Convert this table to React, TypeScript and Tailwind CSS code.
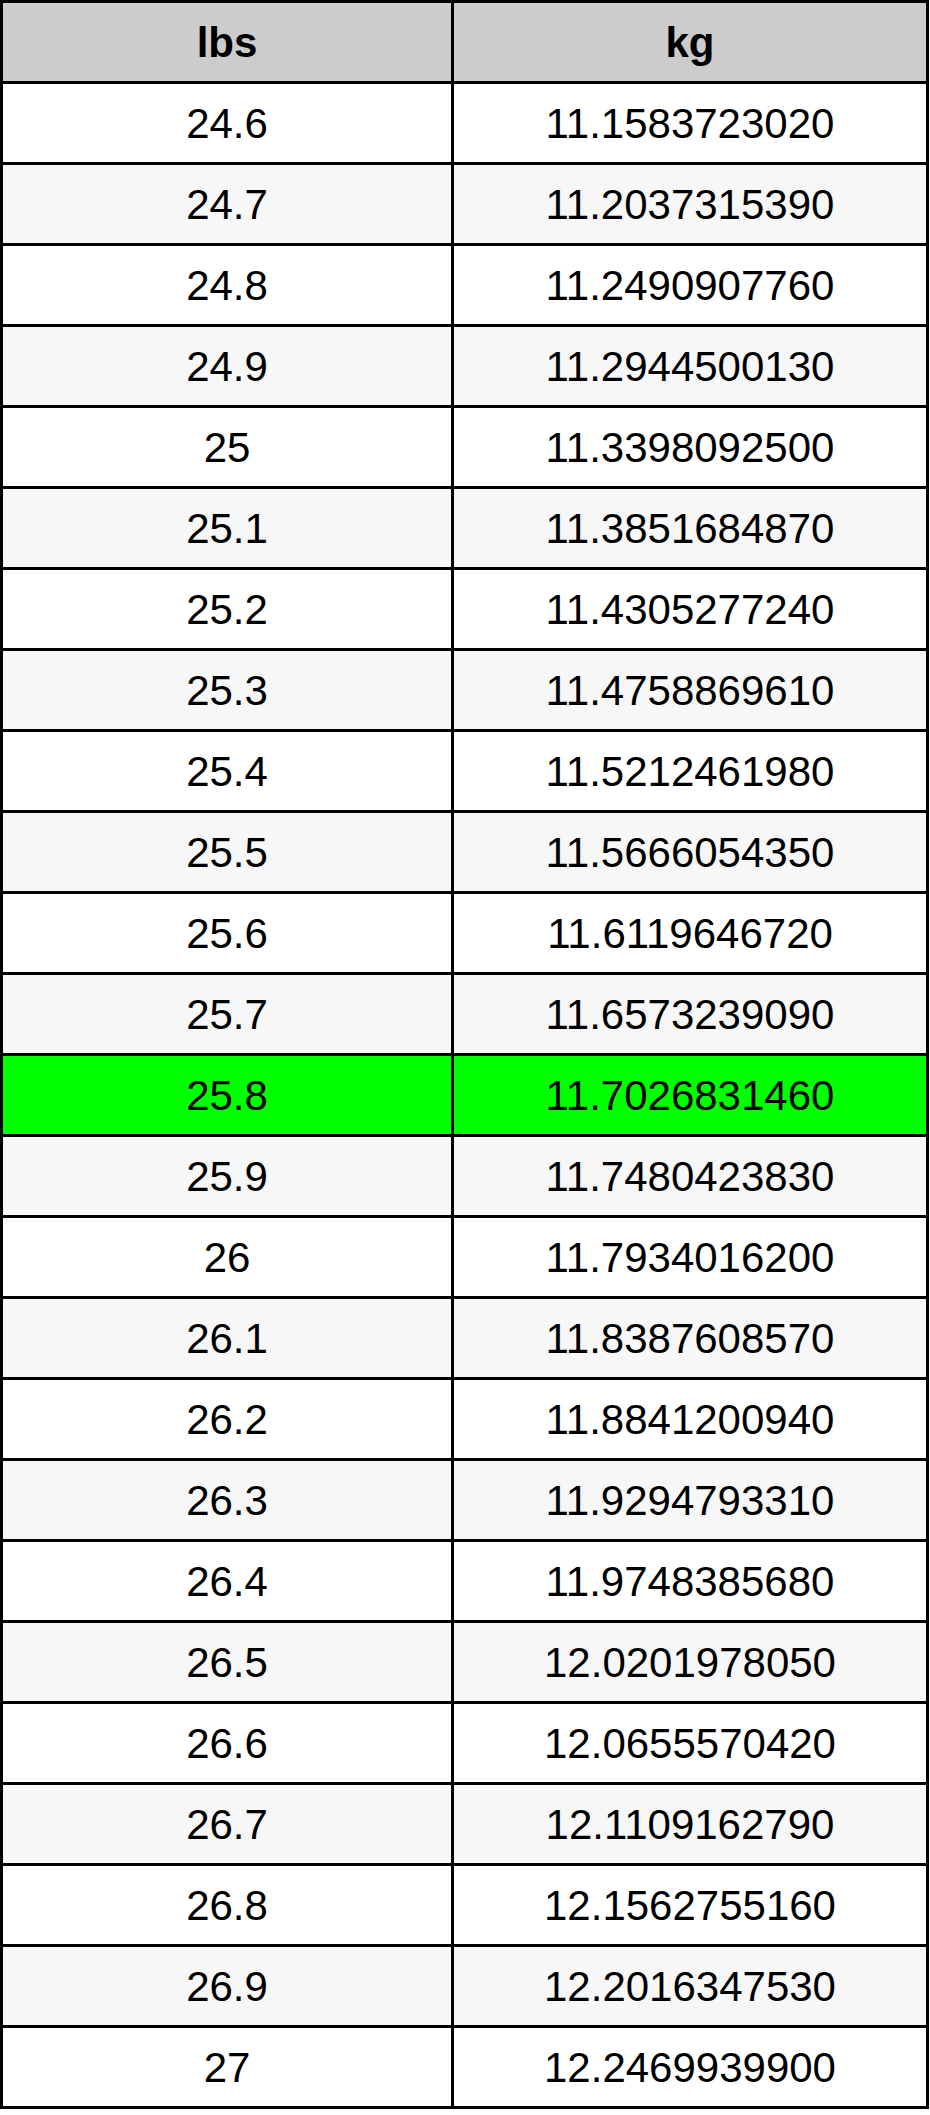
import React from "react";

const rows: [string, string][] = [
  ["24.6", "11.1583723020"],
  ["24.7", "11.2037315390"],
  ["24.8", "11.2490907760"],
  ["24.9", "11.2944500130"],
  ["25", "11.3398092500"],
  ["25.1", "11.3851684870"],
  ["25.2", "11.4305277240"],
  ["25.3", "11.4758869610"],
  ["25.4", "11.5212461980"],
  ["25.5", "11.5666054350"],
  ["25.6", "11.6119646720"],
  ["25.7", "11.6573239090"],
  ["25.8", "11.7026831460"],
  ["25.9", "11.7480423830"],
  ["26", "11.7934016200"],
  ["26.1", "11.8387608570"],
  ["26.2", "11.8841200940"],
  ["26.3", "11.9294793310"],
  ["26.4", "11.9748385680"],
  ["26.5", "12.0201978050"],
  ["26.6", "12.0655570420"],
  ["26.7", "12.1109162790"],
  ["26.8", "12.1562755160"],
  ["26.9", "12.2016347530"],
  ["27", "12.2469939900"],
];

export default function App() {
  return (
    <div
      className="bg-white"
      style={{ fontFamily: '"Liberation Sans", Arial, sans-serif' }}
    >
      <div className="grid w-[929px] grid-cols-[448px_472px] auto-rows-[78px] gap-[3px] bg-black p-[3px] text-[42px] text-black">
        <div className="flex items-center justify-center bg-[#cccccc] font-bold">lbs</div>
        <div className="flex items-center justify-center bg-[#cccccc] font-bold">kg</div>
        {rows.map(([a, b], i) => {
          const bg =
            a === "25.8"
              ? "bg-[#00ff00]"
              : i % 2 === 1
              ? "bg-[#f7f7f7]"
              : "bg-white";
          return (
            <React.Fragment key={a}>
              <div className={`flex items-center justify-center ${bg}`}>{a}</div>
              <div className={`flex items-center justify-center ${bg}`}>{b}</div>
            </React.Fragment>
          );
        })}
      </div>
    </div>
  );
}
